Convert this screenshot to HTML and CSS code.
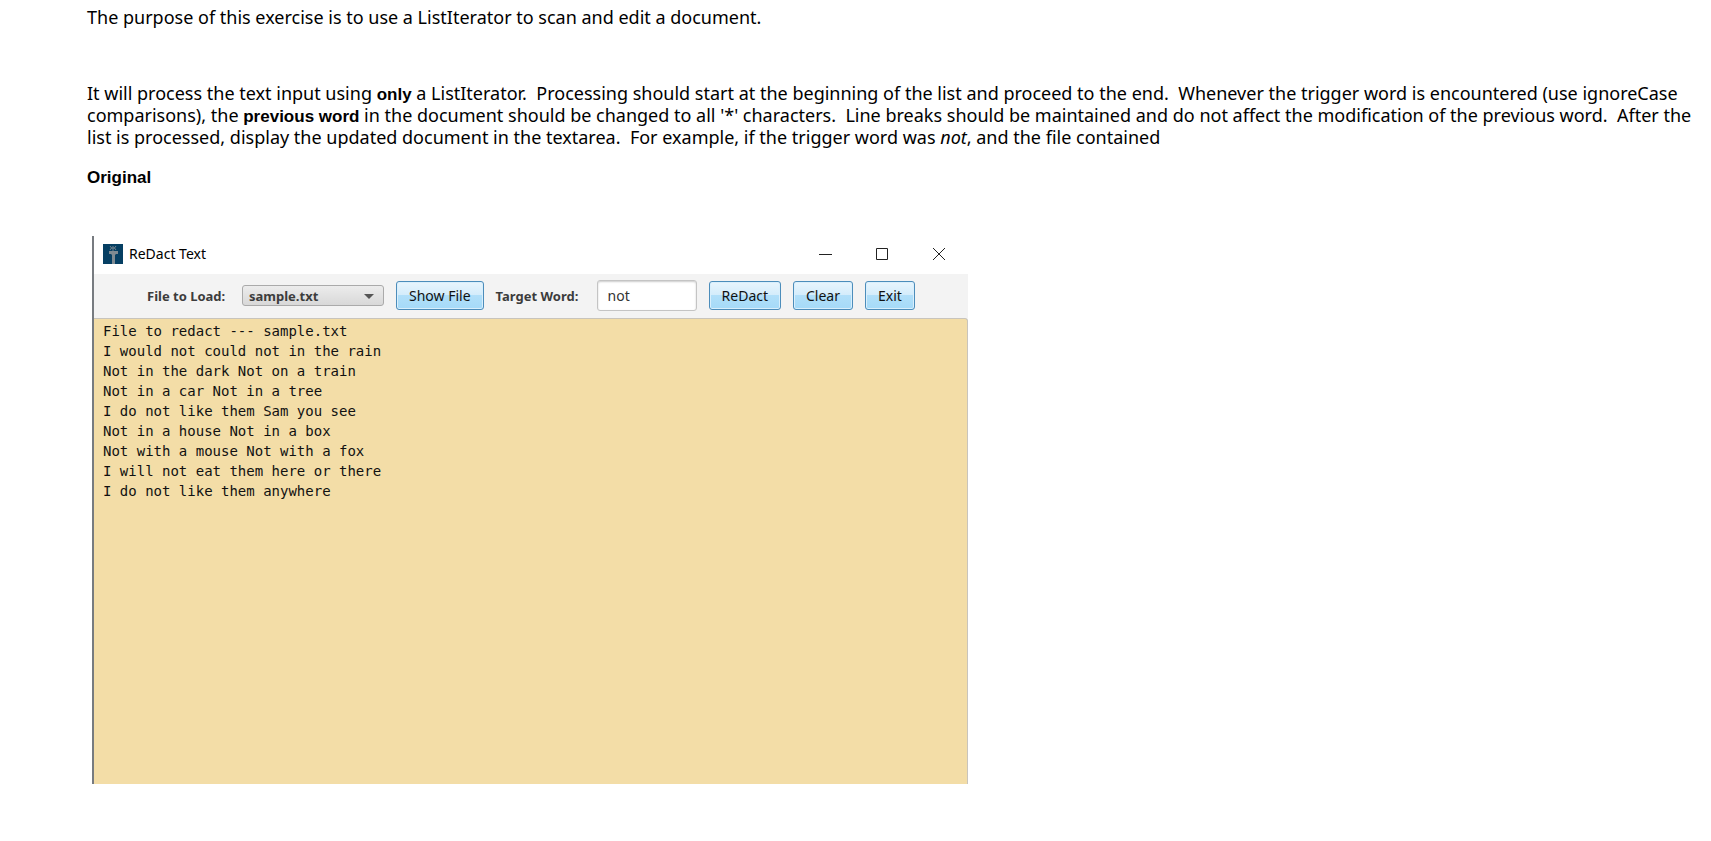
FILE: index.html
```html
<!DOCTYPE html>
<html lang="en">
<head>
    <meta charset="UTF-8">
    <meta name="viewport" content="width=device-width, initial-scale=1.0">
    <title>ReDact Text</title>
    <link rel="stylesheet" href="styles.css">
</head>
<body>
    <p class="intro">The purpose of this exercise is to use a ListIterator to scan and edit a document.</p>
    <p class="details">
        It will process the text input using <strong>only</strong> a ListIterator.&nbsp; Processing should start at the beginning of the list and proceed to the end.&nbsp; Whenever the trigger word is encountered (use ignoreCase<br>
        comparisons), the <strong>previous word</strong> in the document should be changed to all '*' characters.&nbsp; Line breaks should be maintained and do not affect the modification of the previous word.&nbsp; After the<br>
        list is processed, display the updated document in the textarea.&nbsp; For example, if the trigger word was <em>not</em>, and the file contained
    </p>
    <p class="caption"><strong>Original</strong></p>

    <div class="window">
        <div class="titlebar">
            <svg class="app-icon" viewBox="0 0 20 20">
                <rect width="20" height="20" fill="#063f63"/>
                <path d="M7 2l1.500 2L7 6M10 2v5M13 2l-1.500 2L13 6M8 4h4" stroke="#75838d" fill="none"/>
                <path d="M6 7h9v3h-2l-1 1v9h-3v-9l-1-1H6z" fill="#7f8a92"/>
            </svg>
            <span class="title">ReDact Text</span>
            <svg class="win-icon" viewBox="0 0 14 14"><path d="M0 7.500h13"/></svg>
            <svg class="win-icon" viewBox="0 0 14 14"><path d="M.5 1.500h11v11H.5z"/></svg>
            <svg class="win-icon" viewBox="0 0 14 14"><path d="M0 1l12 12M12 1L0 13"/></svg>
        </div>
        <form class="toolbar" onsubmit="return false">
            <label class="file-label" for="file">File to Load:</label>
            <div class="select-wrap">
                <select id="file">
                    <option>sample.txt</option>
                </select>
            </div>
            <button type="button">Show File</button>
            <label class="target-label" for="target">Target Word:</label>
            <input type="text" id="target" value="not">
            <button type="button">ReDact</button>
            <button type="button">Clear</button>
            <button type="button">Exit</button>
        </form>
        <textarea class="document" aria-label="Document" spellcheck="false">File to redact --- sample.txt
I would not could not in the rain
Not in the dark Not on a train
Not in a car Not in a tree
I do not like them Sam you see
Not in a house Not in a box
Not with a mouse Not with a fox
I will not eat them here or there
I do not like them anywhere</textarea>
    </div>
</body>
</html>
```

FILE: styles.css
```css
* {
    box-sizing: border-box;
}
body {
    margin: 0;
    padding: 6px 0 56px 87px;
    background-color: #fff;
    color: #000;
    font-family: "Noto Sans", sans-serif;
    font-size: 18px;
    line-height: 22px;
}
p {
    margin: 0;
}
strong {
    font-family: Arial, "Liberation Sans", sans-serif;
    font-size: 17px;
    line-height: 1;
}
.intro {
    margin-bottom: 54px;
}
.details {
    margin-bottom: 17px;
}
.caption {
    margin-bottom: 49px;
}
.window {
    width: 876px;
    max-width: 100%;
    margin-left: 5px;
    border-left: 2px solid #777b80;
    font-family: "Noto Sans", "Open Sans", sans-serif;
}
.titlebar {
    display: flex;
    align-items: center;
    gap: 43px;
    height: 38px;
    padding: 0 21px 2px 9px;
}
.app-icon {
    width: 20px;
    height: 20px;
    margin-right: -37px;
}
.title {
    flex: 1;
    font-size: 14px;
}
.win-icon {
    width: 14px;
    height: 14px;
    fill: none;
    stroke: #222;
}
.toolbar {
    display: flex;
    align-items: center;
    gap: 12px;
    height: 44px;
    margin: 0;
    padding: 0 0 1px 53px;
    background-color: #f3f3f3;
}
.toolbar label {
    color: #3c3c3c;
    font-size: 13px;
    font-weight: bold;
    white-space: nowrap;
}
.file-label {
    width: 83px;
}
.target-label {
    width: 89px;
}
.select-wrap {
    position: relative;
    width: 142px;
}
.select-wrap::after {
    content: "";
    position: absolute;
    top: 9px;
    right: 10px;
    border: 5px solid transparent;
    border-top-color: #555;
    border-bottom: 0;
    pointer-events: none;
}
select {
    display: block;
    appearance: none;
    width: 100%;
    height: 21px;
    padding: 0 6px;
    border: 1px solid #aaa;
    border-radius: 3px;
    background: linear-gradient(#ececec, #d8d8d8);
    color: #3c3c3c;
    font-family: inherit;
    font-size: 13px;
    font-weight: bold;
    line-height: 18px;
}
button {
    height: 29px;
    padding: 0 12px;
    border: 1px solid #4c8dbb;
    border-radius: 3px;
    background: linear-gradient(#e8f5fd, #d3ecfb 50%, #b1dff9 50%, #a5daf8);
    box-shadow: inset 0 0 0 1px #d9effc;
    color: #111;
    font-family: inherit;
    font-size: 14px;
    white-space: nowrap;
}
input {
    width: 100px;
    height: 31px;
    padding: 0 10px;
    border: 1px solid #c4c4c4;
    border-radius: 3px;
    box-shadow: inset 0 1px 2px #ccc;
    color: #333;
    font-family: inherit;
    font-size: 14px;
}
.document {
    display: block;
    width: 100%;
    height: 466px;
    padding: 2px 9px;
    border: 1px solid #c8c4bc;
    border-width: 1px 1px 0 0;
    border-radius: 0 3px 0 0;
    background-color: #f3dda7;
    color: #111;
    font-family: Consolas, "DejaVu Sans Mono", monospace;
    font-size: 14px;
    line-height: 20px;
    outline: none;
    resize: none;
}
```
